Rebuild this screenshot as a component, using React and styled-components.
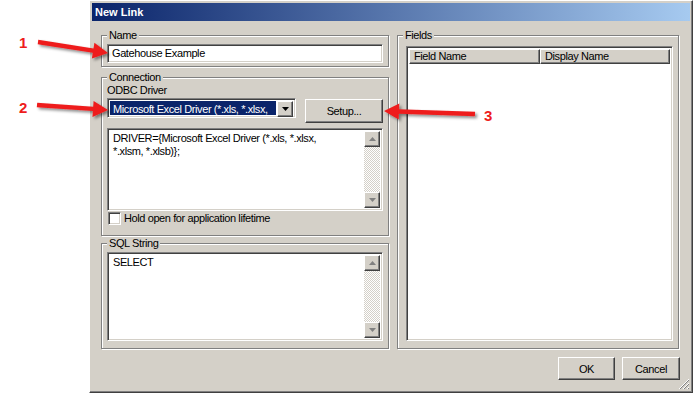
import React from 'react';
import styled, { createGlobalStyle } from 'styled-components';

const face = '#d4d0c8';

const GlobalStyle = createGlobalStyle`
  html, body {
    margin: 0;
    padding: 0;
    background: #fff;
  }
  body {
    font-family: "Liberation Sans", Arial, sans-serif;
    font-size: 11px;
    letter-spacing: -0.4px;
    color: #000;
  }
`;

const Page = styled.div`
  position: relative;
  width: 693px;
  height: 393px;
  display: flex;
  overflow: hidden;
`;

const Gutter = styled.div`
  width: 89px;
  flex: none;
`;

const Window = styled.div`
  position: relative;
  width: 604px;
  height: 393px;
  box-sizing: border-box;
  flex: none;
  display: flex;
  flex-direction: column;
  background: ${face};
  border: 1px solid;
  border-color: #fff #404040 #404040 #fff;
  box-shadow: inset -1px -1px 0 #808080;
  padding: 2px;
`;

const TitleBar = styled.div`
  height: 18px;
  display: flex;
  align-items: center;
  padding-left: 3px;
  background: linear-gradient(to right, #0a246a, #a6caf0);
  color: #fff;
  font-weight: bold;
  font-size: 11px;
  letter-spacing: 0;
`;

const Body = styled.div`
  display: grid;
  grid-template-columns: 288px 282px;
  column-gap: 8px;
  padding: 14px 0 0 9px;
`;

const Column = styled.div`
  display: flex;
  flex-direction: column;
`;

const GroupBox = styled.div`
  position: relative;
  box-sizing: border-box;
  height: ${p => p.$h}px;
  margin-top: ${p => p.$mt || 0}px;
  padding: ${p => p.$pad};
  border: 1px solid #808080;
  box-shadow: inset 1px 1px 0 #fff, 1px 1px 0 #fff;
  display: flex;
  flex-direction: column;
`;

const Caption = styled.span`
  position: absolute;
  top: -7px;
  left: 5px;
  padding: 0 2px;
  line-height: 13px;
  background: ${face};
`;

const sunken = `
  box-sizing: border-box;
  background: #fff;
  border: 1px solid;
  border-color: #808080 #fff #fff #808080;
  box-shadow: inset 1px 1px 0 #404040, inset -1px -1px 0 ${face};
`;

const raised = `
  box-sizing: border-box;
  background: ${face};
  border: 1px solid;
  border-color: #fff #404040 #404040 #fff;
  box-shadow: inset -1px -1px 0 #808080;
`;

const TextBox = styled.div`
  ${sunken}
  height: 19px;
  padding: 0 4px;
  line-height: 17px;
  white-space: nowrap;
`;

const FieldLabel = styled.div`
  line-height: 13px;
`;

const ComboRow = styled.div`
  display: flex;
  align-items: flex-start;
  gap: 9px;
  margin-top: 1px;
`;

const Combo = styled.div`
  ${sunken}
  width: 189px;
  height: 20px;
  padding: 2px;
  display: flex;
`;

const Selection = styled.div`
  flex: 1;
  min-width: 0;
  margin-right: 1px;
  padding-left: 3px;
  background: #0a246a;
  color: #fff;
  line-height: 16px;
  white-space: nowrap;
  overflow: hidden;
`;

const ArrowButton = styled.div`
  ${raised}
  width: ${p => p.$w || 16}px;
  height: ${p => p.$hgt || 16}px;
  flex: none;
  display: flex;
  align-items: center;
  justify-content: center;
`;

const Button = styled.div`
  ${raised}
  width: ${p => p.$w}px;
  height: ${p => p.$h}px;
  margin-top: ${p => p.$mt || 0}px;
  display: flex;
  align-items: center;
  justify-content: center;
  flex: none;
`;

const TextArea = styled.div`
  ${sunken}
  height: ${p => p.$h}px;
  margin-top: ${p => p.$mt || 0}px;
  padding: 2px;
  display: flex;
`;

const AreaText = styled.div`
  flex: 1;
  padding: 1px 3px;
  line-height: 13px;
  white-space: pre;
`;

const ScrollBar = styled.div`
  width: 16px;
  display: flex;
  flex-direction: column;
`;

const Track = styled.div`
  flex: 1;
  background: repeating-conic-gradient(${face} 0 25%, #fff 0 50%) 0 0 / 2px 2px;
`;

const CheckRow = styled.div`
  display: flex;
  align-items: center;
  gap: 3px;
  margin-top: 1px;
  line-height: 13px;
`;

const CheckBox = styled.div`
  ${sunken}
  width: 13px;
  height: 13px;
  margin-left: 1px;
`;

const ListView = styled.div`
  ${sunken}
  height: 295px;
  padding: 2px;
`;

const Header = styled.div`
  display: flex;
  height: 15px;
`;

const HeaderCell = styled.div`
  ${raised}
  width: ${p => (p.$w ? `${p.$w}px` : 'auto')};
  flex: ${p => (p.$w ? 'none' : 1)};
  padding-left: 4px;
  line-height: 13px;
`;

const Footer = styled.div`
  display: flex;
  justify-content: flex-end;
  gap: 7px;
  padding: 8px 10px 0 0;
`;

const Grip = styled.svg`
  position: absolute;
  right: 2px;
  bottom: 2px;
`;

const Overlay = styled.svg`
  position: absolute;
  left: 0;
  top: 0;
  pointer-events: none;
`;

const Tri = ({ dir, color = '#000' }) => (
  <svg width="7" height="4" viewBox="0 0 7 4">
    <polygon points={dir === 'up' ? '3.5,0 7,4 0,4' : '0,0 7,0 3.5,4'} fill={color} />
  </svg>
);

function arrowPoints(x1, y1, x2, y2) {
  const len = Math.hypot(x2 - x1, y2 - y1);
  const dx = (x2 - x1) / len;
  const dy = (y2 - y1) / len;
  const nx = -dy;
  const ny = dx;
  const hl = 15;
  const w = 2.2;
  const hw = 8;
  const bx = x2 - dx * hl;
  const by = y2 - dy * hl;
  const pts = [
    [x1 + nx * w, y1 + ny * w],
    [bx + nx * w, by + ny * w],
    [bx + nx * hw, by + ny * hw],
    [x2, y2],
    [bx - nx * hw, by - ny * hw],
    [bx - nx * w, by - ny * w],
    [x1 - nx * w, y1 - ny * w],
  ];
  return pts.map(p => p.map(v => v.toFixed(1)).join(',')).join(' ');
}

const arrows = [
  { from: [38, 42], to: [108, 53] },
  { from: [37, 105], to: [108, 110] },
  { from: [475, 114], to: [384, 111] },
];

const marks = [
  { n: '1', x: 19, y: 48 },
  { n: '2', x: 19, y: 113 },
  { n: '3', x: 484, y: 121 },
];

export default function App() {
  return (
    <Page>
      <GlobalStyle />
      <Gutter />
      <Window>
        <TitleBar>New Link</TitleBar>
        <Body>
          <Column>
            <GroupBox $h={32} $pad="8px 5px 0">
              <Caption>Name</Caption>
              <TextBox>Gatehouse Example</TextBox>
            </GroupBox>

            <GroupBox $h={159} $mt={10} $pad="6px 5px 0">
              <Caption>Connection</Caption>
              <FieldLabel>ODBC Driver</FieldLabel>
              <ComboRow>
                <Combo>
                  <Selection>Microsoft Excel Driver (*.xls, *.xlsx,</Selection>
                  <ArrowButton $hgt={16}>
                    <Tri dir="down" />
                  </ArrowButton>
                </Combo>
                <Button $w={78} $h={24} $mt={1}>Setup...</Button>
              </ComboRow>
              <TextArea $h={83} $mt={5}>
                <AreaText>{'DRIVER={Microsoft Excel Driver (*.xls, *.xlsx,\n*.xlsm, *.xlsb)};'}</AreaText>
                <ScrollBar>
                  <ArrowButton><Tri dir="up" color="#808080" /></ArrowButton>
                  <Track />
                  <ArrowButton><Tri dir="down" color="#808080" /></ArrowButton>
                </ScrollBar>
              </TextArea>
              <CheckRow>
                <CheckBox />
                <span>Hold open for application lifetime</span>
              </CheckRow>
            </GroupBox>

            <GroupBox $h={106} $mt={7} $pad="8px 5px 0">
              <Caption>SQL String</Caption>
              <TextArea $h={89}>
                <AreaText>SELECT</AreaText>
                <ScrollBar>
                  <ArrowButton><Tri dir="up" color="#808080" /></ArrowButton>
                  <Track />
                  <ArrowButton><Tri dir="down" color="#808080" /></ArrowButton>
                </ScrollBar>
              </TextArea>
            </GroupBox>
          </Column>

          <Column>
            <GroupBox $h={314} $pad="10px 5px 0 8px">
              <Caption>Fields</Caption>
              <ListView>
                <Header>
                  <HeaderCell $w={131}>Field Name</HeaderCell>
                  <HeaderCell>Display Name</HeaderCell>
                </Header>
              </ListView>
            </GroupBox>
          </Column>
        </Body>

        <Footer>
          <Button $w={57} $h={23}>OK</Button>
          <Button $w={58} $h={23}>Cancel</Button>
        </Footer>

        <Grip width="12" height="12" viewBox="0 0 12 12">
          <g strokeWidth="1">
            <line x1="11" y1="1" x2="1" y2="11" stroke="#fff" />
            <line x1="11" y1="2" x2="2" y2="11" stroke="#808080" />
            <line x1="11" y1="5" x2="5" y2="11" stroke="#fff" />
            <line x1="11" y1="6" x2="6" y2="11" stroke="#808080" />
            <line x1="11" y1="9" x2="9" y2="11" stroke="#fff" />
            <line x1="11" y1="10" x2="10" y2="11" stroke="#808080" />
          </g>
        </Grip>
      </Window>

      <Overlay width="693" height="393" viewBox="0 0 693 393">
        <defs>
          <filter id="shadow" x="-20%" y="-50%" width="140%" height="200%">
            <feDropShadow dx="2" dy="2" stdDeviation="1.5" floodColor="#000" floodOpacity="0.45" />
          </filter>
        </defs>
        {arrows.map((a, i) => (
          <polygon key={i} points={arrowPoints(...a.from, ...a.to)} fill="#ee1c1c" filter="url(#shadow)" />
        ))}
        {marks.map(m => (
          <text
            key={m.n}
            x={m.x}
            y={m.y}
            fill="#ee1c1c"
            fontFamily="Liberation Sans, Arial, sans-serif"
            fontWeight="bold"
            fontSize="15"
          >
            {m.n}
          </text>
        ))}
      </Overlay>
    </Page>
  );
}
